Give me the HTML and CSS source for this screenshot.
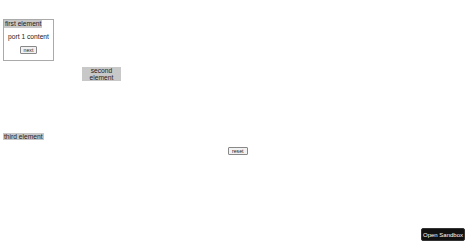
FILE: index.html
```html
<!DOCTYPE html>
<html>
<head>
<meta charset="utf-8">
<link rel="stylesheet" href="styles.css">
</head>
<body>
<div class="canvas">
  <div class="port">
    <div class="label">first element</div>
    <div class="port-body">
      <div class="content">port 1 content</div>
      <button class="btn">next</button>
    </div>
  </div>
  <div class="second">second<br>element</div>
  <div class="third">third element</div>
  <button class="btn reset">reset</button>
  <button class="sandbox">Open Sandbox</button>
</div>
</body>
</html>
```

FILE: styles.css
```css
html, body {
  margin: 0;
  padding: 0;
  background: #fff;
}
.canvas {
  position: relative;
  width: 474px;
  height: 248px;
  font-family: "Liberation Sans", Arial, sans-serif;
  font-size: 6.7px;
  color: #222;
}
.port {
  position: absolute;
  left: 3px;
  top: 19px;
  width: 51px;
  height: 42px;
  border: 1px solid #aaa;
  box-sizing: border-box;
  display: flex;
  flex-direction: column;
  align-items: flex-start;
}
.label {
  background: #c8c8c8;
  padding: 0 1px;
  line-height: 8px;
}
.port-body {
  align-self: stretch;
  display: flex;
  flex-direction: column;
  align-items: center;
  padding-top: 5px;
  gap: 5px;
}
.content {
  line-height: 8px;
}
.btn {
  font-family: "Liberation Sans", Arial, sans-serif;
  font-size: 5.2px;
  line-height: 6px;
  padding: 0 3px;
  margin: 0;
  background: #f2f2f2;
  border: 1px solid #888;
  border-radius: 1px;
  color: #222;
}
.second {
  position: absolute;
  left: 82px;
  top: 67px;
  width: 39px;
  height: 14px;
  background: #c8c8c8;
  text-align: center;
  line-height: 7px;
}
.third {
  position: absolute;
  left: 3px;
  top: 133px;
  background: #c8c8c8;
  padding: 0 1px;
  line-height: 7px;
}
.reset {
  position: absolute;
  left: 228px;
  top: 147px;
}
.sandbox {
  position: absolute;
  left: 421px;
  top: 228px;
  width: 44px;
  height: 13px;
  background: #111;
  color: #fff;
  border: 1px solid #333;
  border-radius: 2px;
  font-family: "Liberation Sans", Arial, sans-serif;
  font-size: 6px;
  padding: 0;
}
```
